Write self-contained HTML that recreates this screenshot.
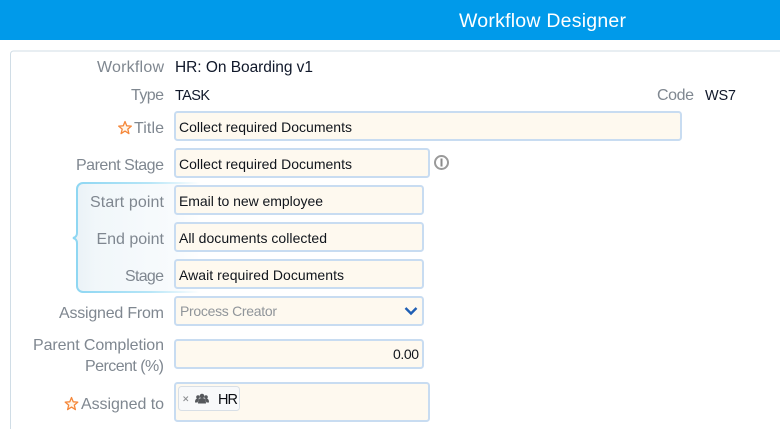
<!DOCTYPE html>
<html>
<head>
<meta charset="utf-8">
<style>
html,body{margin:0;padding:0;background:#fff;width:780px;height:429px;overflow:hidden}
svg{display:block}
text{font-family:"Liberation Sans",sans-serif}
.l{font-size:16px;fill:#7f8790}
.v{font-size:15.5px;fill:#10182a}
.i{font-size:14px;fill:#10151c}
.b{fill:#fef9ef;stroke:#c8dcf1;stroke-width:2}
</style>
</head>
<body>
<svg width="780" height="429" viewBox="0 0 780 429" xmlns="http://www.w3.org/2000/svg">
<defs>
<linearGradient id="g" x1="0" x2="1" y1="0" y2="0">
<stop offset="0" stop-color="#e9f1f6"/><stop offset="0.18" stop-color="#f1f7fa"/><stop offset="0.8" stop-color="#f8fbfd"/><stop offset="1" stop-color="#ffffff"/>
</linearGradient>
<linearGradient id="e" x1="0" x2="1" y1="0" y2="0">
<stop offset="0" stop-color="#8dd6f2"/><stop offset="0.6" stop-color="#b5e5f7"/><stop offset="1" stop-color="#ffffff"/>
</linearGradient>
</defs>
<rect width="780" height="40" fill="#009aea"/>
<text x="459" y="27" font-size="19.500" fill="#fff" textLength="167" lengthAdjust="spacing">Workflow Designer</text>

<path d="M10.500 429V54a3 3 0 0 1 3-3H780" fill="none" stroke="#d0dde6" stroke-width="1"/>

<!-- bracket -->
<path d="M82 183H200V292H82a5 5 0 0 1-5-5V243q0-4-4-5q4-1 4-5V188a5 5 0 0 1 5-5z" fill="url(#g)"/>
<path d="M200 183H83a6 6 0 0 0-6 6V233q0 4-4 5q4 1 4 5V286a6 6 0 0 0 6 6H200" fill="none" stroke="url(#e)" stroke-width="2"/>

<text class="l" x="97" y="72" textLength="67" lengthAdjust="spacing">Workflow</text>
<text class="v" x="175" y="72" textLength="138" lengthAdjust="spacing">HR: On Boarding v1</text>
<text class="l" x="131" y="100" textLength="33" lengthAdjust="spacing">Type</text>
<text class="v" x="175" y="100" style="font-size:14.500px" textLength="35" lengthAdjust="spacing">TASK</text>
<text class="l" x="657" y="100" textLength="37" lengthAdjust="spacing">Code</text>
<text class="v" x="705" y="100" style="font-size:14.500px" textLength="31" lengthAdjust="spacing">WS7</text>

<path d="M125 121.500l1.700 4.300 4.600.3-3.500 3 1.100 4.500-3.900-2.500-3.900 2.500 1.100-4.500-3.500-3 4.600-.3z" fill="#fff6ea" stroke="#f5873a" stroke-width="1.300" stroke-linejoin="round"/>
<text class="l" x="134" y="133" textLength="30" lengthAdjust="spacing">Title</text>
<rect class="b" x="175" y="112" width="506" height="28" rx="2.500"/>
<text class="i" x="179" y="132" textLength="173" lengthAdjust="spacing">Collect required Documents</text>

<text class="l" x="76" y="170" textLength="88" lengthAdjust="spacing">Parent Stage</text>
<rect class="b" x="175" y="149" width="254" height="28" rx="2.500"/>
<text class="i" x="179" y="169" textLength="173" lengthAdjust="spacing">Collect required Documents</text>
<circle cx="441.500" cy="162.500" r="6.500" fill="none" stroke="#9a9a9a" stroke-width="2"/>
<path d="M441.500 158.500v8" stroke="#8a8a8a" stroke-width="2"/>

<text class="l" x="90" y="207" textLength="74" lengthAdjust="spacing">Start point</text>
<rect class="b" x="175" y="186" width="248" height="28" rx="2.500"/>
<text class="i" x="179" y="206" textLength="144" lengthAdjust="spacing">Email to new employee</text>

<text class="l" x="96.500" y="244" textLength="67.500" lengthAdjust="spacing">End point</text>
<rect class="b" x="175" y="223" width="248" height="28" rx="2.500"/>
<text class="i" x="179" y="243" textLength="148" lengthAdjust="spacing">All documents collected</text>

<text class="l" x="125" y="281" textLength="39" lengthAdjust="spacing">Stage</text>
<rect class="b" x="175" y="260" width="248" height="28" rx="2.500"/>
<text class="i" x="179" y="280" textLength="165" lengthAdjust="spacing">Await required Documents</text>

<text class="l" x="59" y="318" textLength="105" lengthAdjust="spacing">Assigned From</text>
<rect class="b" x="175" y="297" width="248" height="28" rx="2.500"/>
<text class="i" x="180" y="316" textLength="97" lengthAdjust="spacing" style="fill:#90959a">Process Creator</text>
<path d="M405.500 308l5.500 5.500 5.500-5.500" fill="none" stroke="#1f5fb4" stroke-width="2.400"/>

<text class="l" x="33" y="350" textLength="131" lengthAdjust="spacing">Parent Completion</text>
<text class="l" x="85" y="371" textLength="79" lengthAdjust="spacing">Percent (%)</text>
<rect class="b" x="175" y="340" width="248" height="28" rx="2.500"/>
<text class="i" x="393" y="359" textLength="26" lengthAdjust="spacing">0.00</text>

<path d="M71.500 397.500l1.700 4.300 4.600.3-3.500 3 1.100 4.500-3.900-2.500-3.900 2.500 1.100-4.500-3.500-3 4.600-.3z" fill="#fff6ea" stroke="#f5873a" stroke-width="1.300" stroke-linejoin="round"/>
<text class="l" x="81" y="409" textLength="83" lengthAdjust="spacing">Assigned to</text>
<rect class="b" x="175" y="383" width="254" height="38" rx="2.500"/>
<rect x="178.500" y="386.500" width="61" height="24" rx="3" fill="#f8f9fa" stroke="#d8dfe6"/>
<path d="M183.500 396.500l4.500 4.500m0-4.500l-4.500 4.500" stroke="#8d8f92" stroke-width="1"/>
<g fill="#55585c">
<circle cx="202" cy="396" r="2.300"/>
<circle cx="198" cy="397" r="1.800"/>
<circle cx="206" cy="397" r="1.800"/>
<path d="M198 403.500c0-4 1.500-5.500 4-5.500s4 1.500 4 5.500z"/>
<path d="M195 402.500c0-2.700.8-4 3-4l1 .5-1.500 3.500zM209 402.500c0-2.700-.8-4-3-4l-1 .5 1.500 3.500z"/>
</g>
<text x="218" y="404" font-size="14.500" fill="#0a0d12" textLength="20" lengthAdjust="spacing">HR</text>
</svg>
</body>
</html>
